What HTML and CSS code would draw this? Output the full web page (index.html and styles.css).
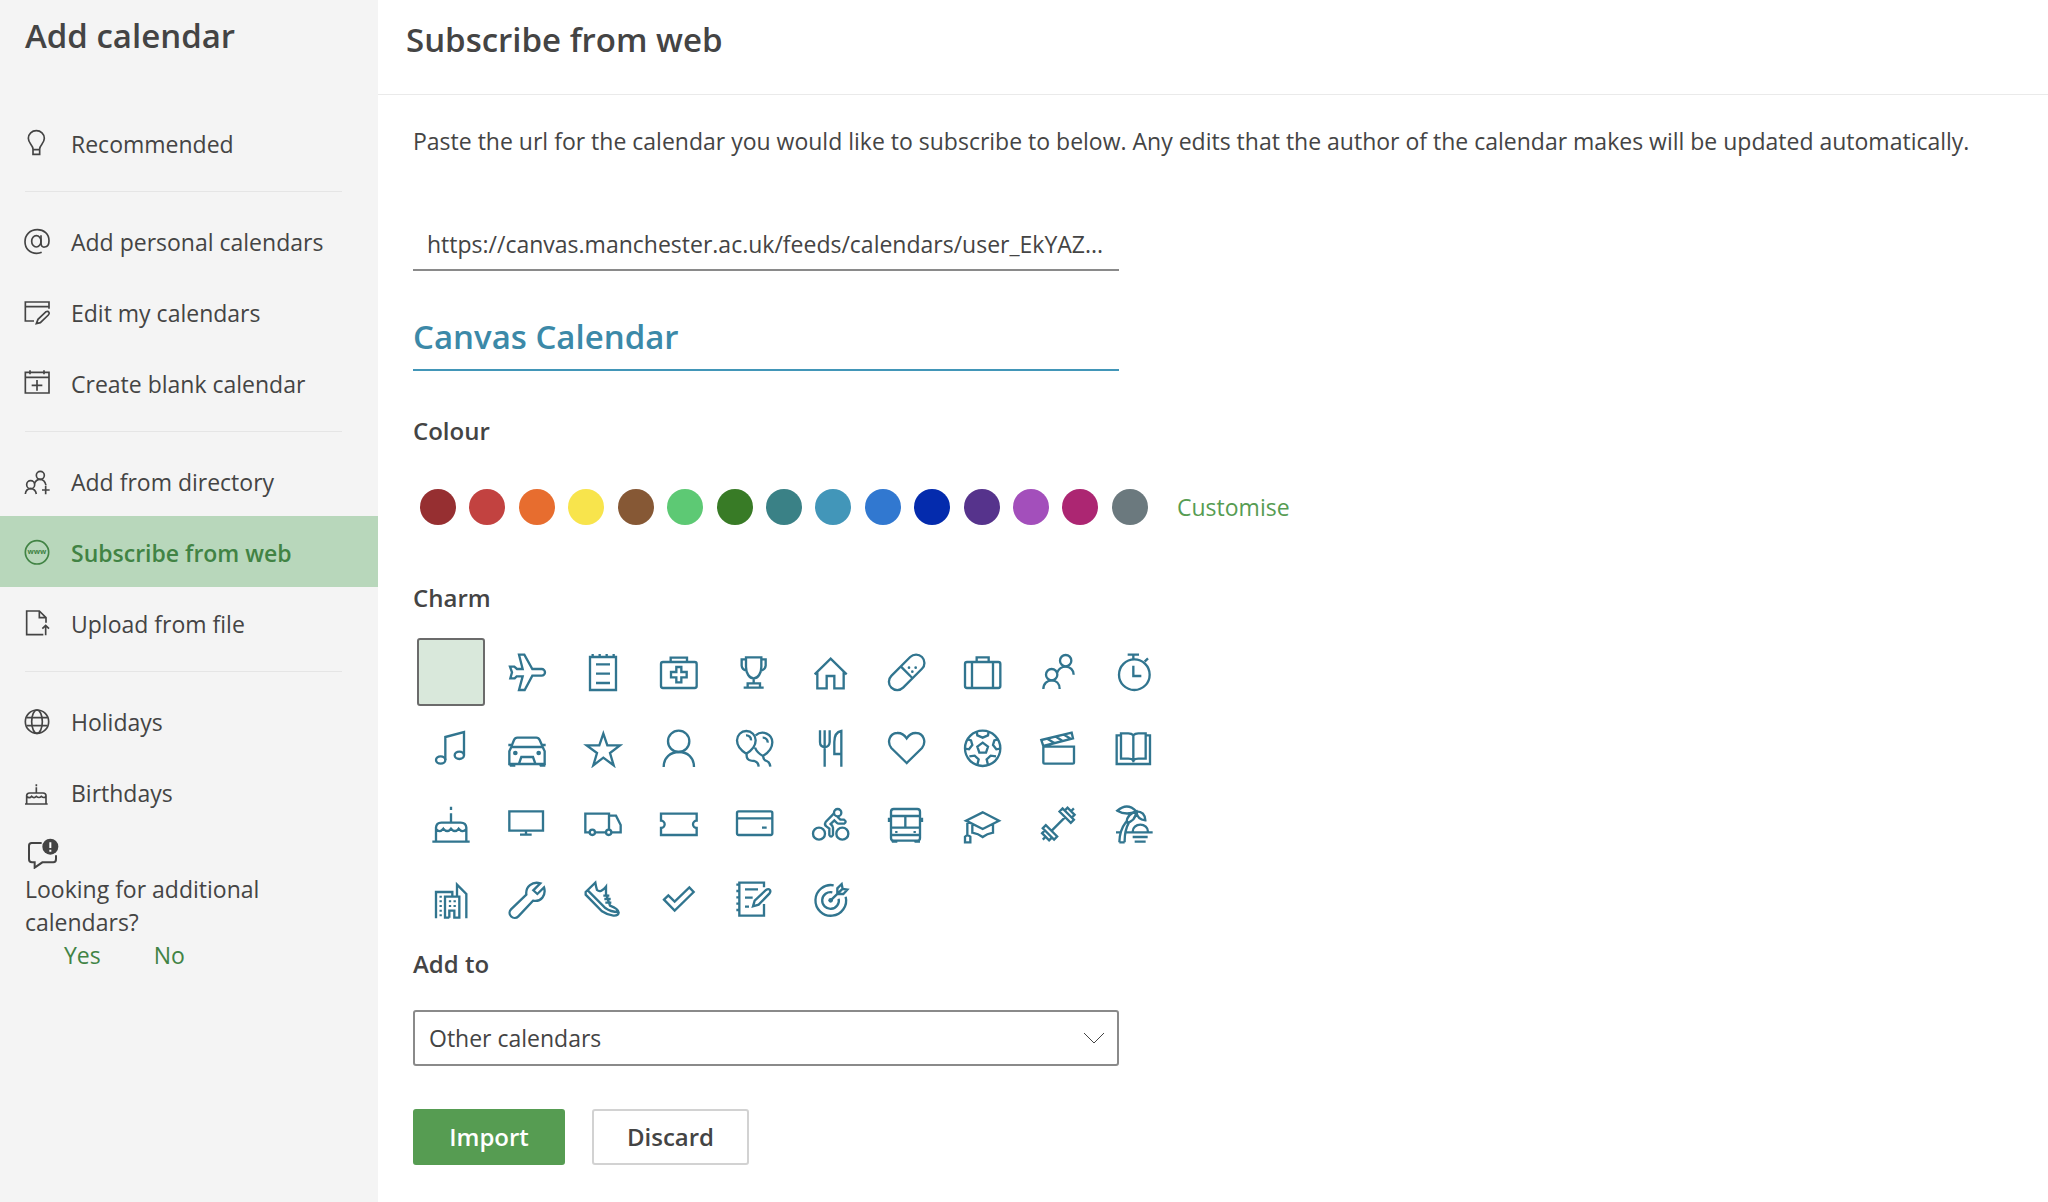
FILE: index.html
```html
<!DOCTYPE html>
<html lang="en-GB">
<head>
<meta charset="utf-8">
<meta name="viewport" content="width=device-width, initial-scale=1">
<title>Add calendar</title>
<link rel="stylesheet" href="styles.css">
</head>
<body>
<div class="app">
  <aside class="sidebar">
    <h1 class="title">Add calendar</h1>
    <nav class="nav" aria-label="Add calendar">
      <a class="nav-item" href="#recommended">
        <svg class="nav-icon" viewBox="69 385 84 84" aria-hidden="true"><path d="M99 445C99 433 85 429 85 413A24 23 0 0 1 133 413C133 429 119 433 119 445V461H99ZM99 447H119"/></svg>
        Recommended
      </a>
      <hr class="divider">
      <a class="nav-item" href="#personal">
        <svg class="nav-icon" viewBox="69 679 84 84" aria-hidden="true"><ellipse cx="109" cy="722" rx="14" ry="17"/><path d="M123 704V727C123 736 127 740 134 739C143 738 147 730 147 720C147 700 132 687 112 687C90 687 75 703 75 723C75 744 90 758 110 758Q119 758 125 755"/></svg>
        Add personal calendars
      </a>
      <a class="nav-item" href="#edit">
        <svg class="nav-icon" viewBox="69 892 84 84" aria-hidden="true"><path d="M102 961H76V904H147V924M76 918H147M109 969L114 956L138 933Q144 930 147 935Q149 939 145 943L121 966Z"/></svg>
        Edit my calendars
      </a>
      <a class="nav-item" href="#create">
        <svg class="nav-icon" viewBox="69 1105 84 84" aria-hidden="true"><path d="M76 1115H147V1177H76ZM76 1130H147M90 1109V1121M132 1109V1121M111 1138V1170M95 1154H127"/></svg>
        Create blank calendar
      </a>
      <hr class="divider">
      <a class="nav-item" href="#directory">
        <svg class="nav-icon" viewBox="69 199 84 84" aria-hidden="true"><circle cx="121" cy="224" r="12"/><circle cx="92" cy="252" r="12"/><path d="M76 280Q78 264 92 264T109 280M103 249Q108 236 120 236Q134 236 138 254M137 256V281M126 268H149"/></svg>
        Add from directory
      </a>
      <a class="nav-item nav-item-active" href="#subscribe" aria-current="page">
        <svg class="nav-icon" viewBox="69 412 84 84" aria-hidden="true"><circle cx="111" cy="455" r="35"/><text class="www" x="111" y="460" text-anchor="middle">www</text></svg>
        Subscribe from web
      </a>
      <a class="nav-item" href="#upload">
        <svg class="nav-icon" viewBox="69 625 84 84" aria-hidden="true"><path d="M130 702H80V631H118L138 651V666M118 631V651H138M137 704V675M127 684L137 674L147 684"/></svg>
        Upload from file
      </a>
      <hr class="divider">
      <a class="nav-item" href="#holidays">
        <svg class="nav-icon" viewBox="69 49 84 84" aria-hidden="true"><circle cx="111" cy="93" r="35"/><ellipse cx="111" cy="93" rx="16" ry="35"/><path d="M80 81H142M80 105H142"/></svg>
        Holidays
      </a>
      <a class="nav-item" href="#birthdays">
        <svg class="nav-icon" viewBox="69 262 84 84" aria-hidden="true"><path d="M75 340H143M80 339V314Q81 307 89 307H129Q138 307 138 315V339M80 317Q88 325 95 317Q102 324 109 317Q117 324 124 317Q132 324 138 317M109 306V290M109 287V281"/></svg>
        Birthdays
      </a>
    </nav>
    <section class="feedback">
      <svg class="feedback-icon" viewBox="81 445 96 93" aria-hidden="true"><path d="M125 460H95Q87 460 87 468V509Q87 518 96 518H104V534L127 518H160Q168 518 168 508V497"/><circle class="badge" cx="151" cy="471" r="24"/><path class="mark" d="M151 458V475M151 480V486"/></svg>
      <p class="feedback-text">Looking for additional calendars?</p>
      <div class="feedback-links"><a class="link" href="#yes">Yes</a><a class="link" href="#no">No</a></div>
    </section>
  </aside>

  <main class="main">
    <header class="main-header"><h2 class="title">Subscribe from web</h2></header>
    <form class="form">
      <p class="intro">Paste the url for the calendar you would like to subscribe to below. Any edits that the author of the calendar makes will be updated automatically.</p>
      <input class="field field-url" type="text" aria-label="Calendar link" value="https://canvas.manchester.ac.uk/feeds/calendars/user_EkYAZ...">
      <input class="field field-name" type="text" aria-label="Calendar name" value="Canvas Calendar">

      <h3 class="section-title" id="colour-title">Colour</h3>
      <div class="colour-row">
        <div class="swatches" role="radiogroup" aria-labelledby="colour-title">
          <input class="swatch dark-red" type="radio" name="colour" aria-label="Dark red">
          <input class="swatch red" type="radio" name="colour" aria-label="Red">
          <input class="swatch orange" type="radio" name="colour" aria-label="Orange">
          <input class="swatch yellow" type="radio" name="colour" aria-label="Yellow">
          <input class="swatch brown" type="radio" name="colour" aria-label="Brown">
          <input class="swatch light-green" type="radio" name="colour" aria-label="Light green">
          <input class="swatch green" type="radio" name="colour" aria-label="Green">
          <input class="swatch teal" type="radio" name="colour" aria-label="Teal">
          <input class="swatch light-blue" type="radio" name="colour" aria-label="Light blue">
          <input class="swatch blue" type="radio" name="colour" aria-label="Blue">
          <input class="swatch dark-blue" type="radio" name="colour" aria-label="Dark blue">
          <input class="swatch purple" type="radio" name="colour" aria-label="Purple">
          <input class="swatch lilac" type="radio" name="colour" aria-label="Lilac">
          <input class="swatch magenta" type="radio" name="colour" aria-label="Magenta">
          <input class="swatch grey" type="radio" name="colour" aria-label="Grey">
        </div>
        <button class="customise" type="button">Customise</button>
      </div>

      <h3 class="section-title section-charm" id="charm-title">Charm</h3>
      <div class="charms" role="radiogroup" aria-labelledby="charm-title">
        <label class="charm"><input type="radio" name="charm" aria-label="None" checked></label>
        <label class="charm"><input type="radio" name="charm" aria-label="Plane"><svg viewBox="321 96 120 120"><path d="M357 104H373L397 147H425A10 10 0 0 1 425 167H397L374 210H357L368 169H350L344 175H331L336 157L330 140H343L351 147H368Z"/></svg></label>
        <label class="charm"><input type="radio" name="charm" aria-label="Notepad"><svg viewBox="549 96 120 120"><path d="M570 111H648V210H570ZM578 102V111M599 102V111M620 102V111M641 102V111M588 133H630M588 161H630M588 189H630"/></svg></label>
        <label class="charm"><input type="radio" name="charm" aria-label="First aid"><svg viewBox="777 96 120 120"><rect x="783" y="126" width="107" height="78" rx="6"/><path d="M812 125V113H861V125M829 141H844V156H860V172H844V187H829V172H813V156H829Z"/></svg></label>
        <label class="charm"><input type="radio" name="charm" aria-label="Trophy"><svg viewBox="1005 96 120 120"><path d="M1038 112H1084V140C1084 160 1074 175 1061 175S1038 160 1038 140ZM1038 118H1025V137Q1026 149 1040 152M1084 118H1097V137Q1096 149 1082 152M1061 175V189M1043 202V190H1080V202M1031 203H1091"/></svg></label>
        <label class="charm"><input type="radio" name="charm" aria-label="Home"><svg viewBox="93 96 120 120"><path d="M104 163L152 116L200 163M112 157V205H140V168H163V205H191V157"/></svg></label>
        <label class="charm"><input type="radio" name="charm" aria-label="Plaster"><svg viewBox="321 96 120 120"><g transform="translate(380 157) rotate(-45)"><rect x="-65" y="-25" width="130" height="50" rx="25"/><path d="M0 -25V25"/></g><circle class="solid" cx="387" cy="143" r="4"/><circle class="solid" cx="407" cy="143" r="4"/><circle class="solid" cx="397" cy="155" r="4"/></svg></label>
        <label class="charm"><input type="radio" name="charm" aria-label="Suitcase"><svg viewBox="549 96 120 120"><rect x="555" y="126" width="106" height="78" rx="6"/><path d="M590 125V112H626V125M576 126V204M639 126V204"/></svg></label>
        <label class="charm"><input type="radio" name="charm" aria-label="People"><svg viewBox="777 96 120 120"><circle cx="857" cy="122" r="17"/><circle cx="815" cy="164" r="17"/><path d="M790 207C790 190 802 181 815 181S839 190 839 207M831 158C836 147 846 140 857 140C870 140 881 150 881 164"/></svg></label>
        <label class="charm"><input type="radio" name="charm" aria-label="Stopwatch"><svg viewBox="1005 96 120 120"><circle cx="1063" cy="164" r="46"/><path d="M1060 118V105M1043 104H1077M1094 125L1104 115M1060 137V168H1084"/></svg></label>

        <label class="charm"><input type="radio" name="charm" aria-label="Music"><svg viewBox="93 324 120 120"><ellipse cx="122" cy="420" rx="14" ry="11"/><ellipse cx="178" cy="406" rx="14" ry="11"/><path d="M136 420V351L192 336V406"/></svg></label>
        <label class="charm"><input type="radio" name="charm" aria-label="Car"><svg viewBox="321 324 120 120"><path d="M334 380L342 360Q345 353 352 353H409Q416 353 419 360L428 380M325 375H334M428 375H437M334 381H428L434 394V432H328V394ZM357 431L364 411H399L406 431"/><circle class="solid" cx="346" cy="399" r="7"/><circle class="solid" cx="416" cy="399" r="7"/><path class="solid" d="M326 431H346V440H330ZM416 431H436V440H420Z"/></svg></label>
        <label class="charm"><input type="radio" name="charm" aria-label="Star"><svg viewBox="549 324 120 120"><path d="M610 341L622 376H660L630 399L641 436L610 413L580 436L591 399L560 376H598Z"/></svg></label>
        <label class="charm"><input type="radio" name="charm" aria-label="Person"><svg viewBox="777 324 120 120"><circle cx="836" cy="364" r="32"/><path d="M791 441C791 412 812 396 837 396S882 412 882 441"/></svg></label>
        <label class="charm"><input type="radio" name="charm" aria-label="Balloons"><svg viewBox="1005 324 120 120"><path d="M1039 401C1020 390 1011 375 1011 361A28 28 0 0 1 1067 361C1067 375 1058 390 1039 401ZM1067 346C1088 328 1117 343 1117 367C1117 383 1106 398 1089 408C1076 401 1069 393 1065 383M1038 346A14 14 0 0 1 1053 361M1088 353A14 14 0 0 1 1103 368M1040 402Q1038 420 1054 422Q1075 422 1076 440M1089 408Q1090 420 1100 423Q1110 427 1111 440"/></svg></label>
        <label class="charm"><input type="radio" name="charm" aria-label="Food"><svg viewBox="93 324 120 120"><path d="M120 331V366Q120 381 134 381T149 366V331M134 331V440M184 440V333C168 336 163 350 163 366V402H184"/></svg></label>
        <label class="charm"><input type="radio" name="charm" aria-label="Heart"><svg viewBox="321 324 120 120"><path d="M380 429L334 384C320 366 329 340 351 339C365 338 374 346 380 355C386 346 396 338 409 339C431 340 440 366 426 384Z"/></svg></label>
        <label class="charm"><input type="radio" name="charm" aria-label="Football"><svg viewBox="549 324 120 120"><circle cx="608" cy="385" r="53"/><path d="M608 368L624 380L618 398H598L592 380ZM590 335L592 346L608 353L624 346L626 335M563 358L573 361L577 375L567 388L556 386M653 358L643 361L639 375L649 388L660 386M568 409L584 407L596 418L592 435M648 409L632 407L620 418L624 435"/></svg></label>
        <label class="charm"><input type="radio" name="charm" aria-label="Film"><svg viewBox="777 324 120 120"><path d="M790 380H882V427Q882 431 878 431H794Q790 431 790 427ZM784 360L875 338L879 355L790 378ZM803 357L823 369M828 350L848 363M852 344L872 356"/></svg></label>
        <label class="charm"><input type="radio" name="charm" aria-label="Book"><svg viewBox="1005 324 120 120"><path d="M1022 346H1010V432H1110V346H1098M1023 340H1045Q1055 340 1060 346Q1065 340 1075 340H1097V416H1075Q1065 416 1060 421Q1055 416 1045 416H1023ZM1060 346V427"/></svg></label>

        <label class="charm"><input type="radio" name="charm" aria-label="Cake"><svg viewBox="93 72 120 120"><path d="M97 185H209M108 184V143Q109 128 124 128H182Q198 128 199 143V184M108 147Q118 160 130 146Q142 160 153 146Q165 160 176 146Q188 160 199 147M153 100V126M153 80V90"/></svg></label>
        <label class="charm"><input type="radio" name="charm" aria-label="Screen"><svg viewBox="321 72 120 120"><path d="M328 94H429V152H328ZM378 152V164M360 164H395"/></svg></label>
        <label class="charm"><input type="radio" name="charm" aria-label="Lorry"><svg viewBox="549 72 120 120"><path d="M568 157H556V101H627V148M586 157H617M627 107H648L662 135V157H636"/><circle cx="577" cy="157" r="8"/><circle cx="626" cy="157" r="8"/></svg></label>
        <label class="charm"><input type="radio" name="charm" aria-label="Ticket"><svg viewBox="777 72 120 120"><path d="M783 101H890V122A11 11 0 0 0 890 144V165H783V144A11 11 0 0 0 783 122Z"/></svg></label>
        <label class="charm"><input type="radio" name="charm" aria-label="Bank card"><svg viewBox="1005 72 120 120"><rect x="1011" y="94" width="106" height="71" rx="5"/><path d="M1011 115H1117M1086 143H1100"/></svg></label>
        <label class="charm"><input type="radio" name="charm" aria-label="Cycling"><svg viewBox="93 72 120 120"><circle cx="117" cy="161" r="18"/><circle cx="187" cy="161" r="18"/><circle cx="173" cy="98" r="11"/><path d="M162 100L137 126Q132 134 139 139L148 146V165Q153 175 159 165V143Q158 137 152 132L163 121L171 129Q173 131 177 131H192Q202 125 192 119H181L172 110"/></svg></label>
        <label class="charm"><input type="radio" name="charm" aria-label="Bus"><svg viewBox="321 72 120 120"><rect x="333" y="87" width="87" height="95" rx="8"/><path d="M333 108H420M333 143H420M333 165H420M376 108V143M327 113V126M426 113V126M349 153V159M404 153V159"/><path class="solid" d="M333 180H352V188H336ZM401 180H420V188H404Z"/></svg></label>
        <label class="charm"><input type="radio" name="charm" aria-label="Graduation"><svg viewBox="549 72 120 120"><path d="M608 97L657 122L608 147L558 122ZM577 133V158Q595 161 608 171Q621 161 639 158V133M562 124V165M555 187V170Q562 162 571 170V187Z"/></svg></label>
        <label class="charm"><input type="radio" name="charm" aria-label="Gym"><svg viewBox="777 72 120 120"><g transform="translate(835 132) rotate(-45)"><path d="M-29 0H29M29 -24H42V24H29ZM42 -15H54V15H42M54 0H66M-29 -24H-42V24H-29ZM-42 -15H-54V15H-42M-54 0H-66"/></g></svg></label>
        <label class="charm"><input type="radio" name="charm" aria-label="Beach"><svg viewBox="1005 72 120 120"><path d="M1018 187Q1019 150 1038 126M1034 187Q1033 152 1047 127M1018 187H1034M1012 92Q1042 66 1069 94Q1038 108 1012 92ZM1069 94Q1095 94 1096 121Q1072 119 1069 94ZM1069 94Q1040 103 1039 128Q1066 125 1069 94ZM1008 157H1020M1034 157H1118M1058 155A23 21 0 0 1 1104 155M1058 171H1103M1064 185H1097"/></svg></label>

        <label class="charm"><input type="radio" name="charm" aria-label="Offices"><svg viewBox="93 300 120 120"><path d="M108 415V336H157V350M148 413H135V350H178V413H163V392H148V413M171 350V314L199 342V415"/><path d="M122 347V411M150 361V383M164 361V383" stroke-dasharray="6 8"/></svg></label>
        <label class="charm"><input type="radio" name="charm" aria-label="Spanner"><svg viewBox="321 300 120 120"><path d="M379 344L333 388A15 15 0 0 0 355 409L399 362C424 367 439 345 432 322L412 342L400 331L421 310C397 303 376 320 379 344Z"/></svg></label>
        <label class="charm"><input type="radio" name="charm" aria-label="Shoe"><svg viewBox="549 300 120 120"><path d="M557 336L586 308Q588 321 591 330Q602 340 618 320V342L630 377Q655 386 656 398Q655 408 640 407Q622 405 606 394L557 344ZM564 332L616 384Q632 396 655 396M610 347H628M613 357H632M616 368H634"/></svg></label>
        <label class="charm"><input type="radio" name="charm" aria-label="Tick"><svg viewBox="777 300 120 120"><path d="M792 359L805 346L824 365L868 322L881 336L824 392Z"/></svg></label>
        <label class="charm"><input type="radio" name="charm" aria-label="Notebook"><svg viewBox="1005 300 120 120"><path d="M1092 322V308H1018V407H1092V372M1009 314H1018M1009 333H1018M1009 352H1018M1009 371H1018M1009 390H1018M1035 328H1074M1035 353H1058M1035 380H1047M1059 379L1064 362L1098 330Q1105 325 1110 330Q1113 335 1108 341L1076 374Z"/></svg></label>
        <label class="charm"><input type="radio" name="charm" aria-label="Target"><svg viewBox="93 300 120 120"><path d="M161 316A46 46 0 1 0 197 350M157 337A25 25 0 1 0 176 356M152 361L186 328M172 340V325L185 312L188 327L202 329L190 342H172"/><circle class="solid" cx="152" cy="361" r="7"/></svg></label>
      </div>

      <label class="section-title section-addto" for="addto">Add to</label>
      <div class="select-wrap">
        <select class="select" id="addto"><option>Other calendars</option></select>
        <svg class="chevron" viewBox="0 0 22 12" aria-hidden="true"><path d="M1 1L11 11L21 1"/></svg>
      </div>

      <div class="actions">
        <button class="button button-primary" type="submit">Import</button>
        <button class="button" type="button">Discard</button>
      </div>
    </form>
  </main>
</div>
</body>
</html>
```
FILE: styles.css
```css
* {
  box-sizing: border-box;
}

body {
  margin: 0;
  background: #fff;
  color: #444;
  font-family: "Open Sans", "Noto Sans", sans-serif;
  font-size: 23px;
  line-height: 34px;
}

h1, h2, h3, p {
  margin: 0;
}

input, select, button {
  margin: 0;
  color: inherit;
  font: inherit;
}

svg {
  display: block;
  flex: none;
  fill: none;
  stroke: currentColor;
}

.app {
  display: flex;
  min-height: 100vh;
}

.title {
  font-size: 33px;
  font-weight: 600;
  line-height: 46px;
}

/* Sidebar */
.sidebar {
  flex: none;
  width: 378px;
  padding-top: 13px;
  background: #f4f4f4;
}

.sidebar .title {
  padding-left: 25px;
}

.nav {
  padding-top: 48px;
}

.nav-item {
  display: flex;
  align-items: center;
  gap: 20px;
  height: 71px;
  padding: 3px 0 0 23px;
  color: inherit;
  text-decoration: none;
  white-space: nowrap;
}

.nav-item-active {
  background: #b8d7bb;
  color: #418344;
  font-weight: 600;
}

.nav-icon {
  width: 28px;
  height: 28px;
  margin-bottom: 3px;
  stroke-width: 5;
}

.www {
  fill: currentColor;
  stroke: none;
  font-size: 22px;
  font-weight: 700;
}

.divider {
  height: 1px;
  margin: 13px 36px 13px 25px;
  border: 0;
  background: #e5e5e5;
}

.feedback {
  padding: 11px 25px 0;
  line-height: 33px;
}

.feedback-icon {
  width: 32px;
  height: 31px;
  margin-left: 2px;
  margin-bottom: 4px;
  stroke-width: 6;
}

.badge {
  fill: currentColor;
  stroke: none;
}

.mark {
  stroke: #fff;
}

.feedback-links {
  display: flex;
  gap: 53px;
  padding-left: 39px;
}

.link {
  color: #418344;
  text-decoration: none;
}

/* Main panel */
.main {
  flex: 1;
  min-width: 0;
}

.main-header {
  padding: 17px 28px 31px;
  border-bottom: 1px solid #eaeaea;
}

.form {
  display: flex;
  flex-direction: column;
  align-items: flex-start;
  padding: 29px 35px 37px;
}

.field {
  width: 706px;
  max-width: 100%;
  border: 0;
  border-bottom: 2px solid #8a8a8a;
  background: none;
  outline: 0;
}

.field-url {
  height: 53px;
  margin-top: 60px;
  padding: 0 14px;
}

.field-name {
  height: 67px;
  margin-top: 33px;
  padding: 0;
  border-color: #4296b8;
  color: #3c89a8;
  font-size: 33px;
  font-weight: 600;
}

.section-title {
  margin-top: 43px;
  font-size: 24px;
  font-weight: 600;
}

.colour-row {
  display: flex;
  align-items: center;
  gap: 29px;
  margin-top: 41px;
  padding-left: 7px;
}

.swatches {
  display: flex;
  justify-content: space-between;
  width: 728px;
}

.swatch {
  width: 36px;
  height: 36px;
  border-radius: 50%;
  appearance: none;
}

.dark-red { background: #962f31; }
.red { background: #c24240; }
.orange { background: #e76d2f; }
.yellow { background: #f8e44c; }
.brown { background: #865835; }
.light-green { background: #5dc974; }
.green { background: #387b26; }
.teal { background: #3a8186; }
.light-blue { background: #4296b9; }
.blue { background: #3178d0; }
.dark-blue { background: #042bad; }
.purple { background: #56338c; }
.lilac { background: #a34fbb; }
.magenta { background: #ac2672; }
.grey { background: #6b797e; }

.customise {
  padding: 0;
  border: 0;
  background: none;
  color: #569c52;
}

.section-charm {
  margin-top: 56px;
}

.charms {
  display: grid;
  grid-template-columns: repeat(10, 76px);
  margin-top: 19px;
  color: #31758f;
}

.charm {
  display: grid;
  place-items: center;
  height: 68px;
  margin: 4px;
  border: 2px solid transparent;
  border-radius: 3px;
}

.charm:has(:checked) {
  border-color: #6b6b6b;
  background: #d9e8db;
}

.charm input,
.charm svg {
  grid-area: 1 / 1;
}

.charm input {
  width: 40px;
  height: 40px;
  appearance: none;
}

.charm svg {
  width: 40px;
  height: 40px;
  stroke-width: 7;
}

.charm .solid {
  fill: currentColor;
  stroke: none;
}

.section-addto {
  margin-top: 9px;
}

.select-wrap {
  display: grid;
  align-items: center;
  width: 706px;
  max-width: 100%;
  margin-top: 29px;
}

.select,
.chevron {
  grid-area: 1 / 1;
}

.select {
  width: 100%;
  height: 56px;
  padding: 0 14px;
  border: 2px solid #8a8a8a;
  border-radius: 3px;
  background: #fff;
  appearance: none;
}

.chevron {
  justify-self: end;
  width: 22px;
  height: 12px;
  margin-right: 14px;
  pointer-events: none;
}

.actions {
  display: flex;
  gap: 27px;
  margin-top: 43px;
}

.button {
  width: 157px;
  height: 56px;
  padding: 0;
  border: 2px solid #d2d2d2;
  border-radius: 3px;
  background: #fff;
  font-size: 24px;
  font-weight: 600;
}

.button-primary {
  width: 152px;
  border-color: #569c52;
  background: #569c52;
  color: #fff;
}
```
